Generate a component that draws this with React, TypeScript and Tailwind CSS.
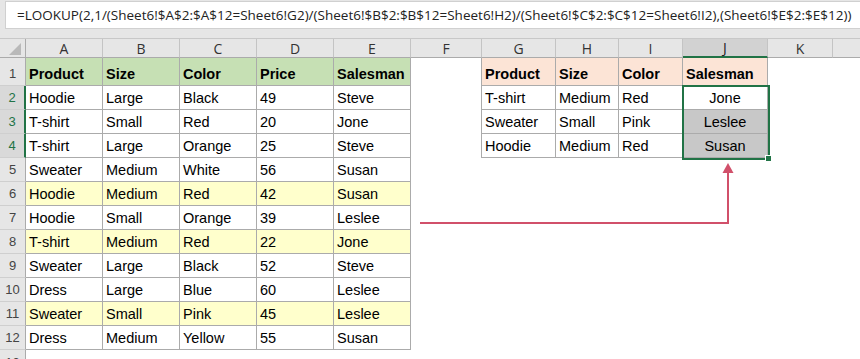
import React from 'react';

const FORMULA =
  '=LOOKUP(2,1/(Sheet6!$A$2:$A$12=Sheet6!G2)/(Sheet6!$B$2:$B$12=Sheet6!H2)/(Sheet6!$C$2:$C$12=Sheet6!I2),(Sheet6!$E$2:$E$12))';

const COLS = [
  { key: 'A', w: 77 },
  { key: 'B', w: 77 },
  { key: 'C', w: 77 },
  { key: 'D', w: 77 },
  { key: 'E', w: 77 },
  { key: 'F', w: 71 },
  { key: 'G', w: 74 },
  { key: 'H', w: 63 },
  { key: 'I', w: 64 },
  { key: 'J', w: 85 },
  { key: 'K', w: 65 },
];

const LEFT = [
  ['Product', 'Size', 'Color', 'Price', 'Salesman'],
  ['Hoodie', 'Large', 'Black', '49', 'Steve'],
  ['T-shirt', 'Small', 'Red', '20', 'Jone'],
  ['T-shirt', 'Large', 'Orange', '25', 'Steve'],
  ['Sweater', 'Medium', 'White', '56', 'Susan'],
  ['Hoodie', 'Medium', 'Red', '42', 'Susan'],
  ['Hoodie', 'Small', 'Orange', '39', 'Leslee'],
  ['T-shirt', 'Medium', 'Red', '22', 'Jone'],
  ['Sweater', 'Large', 'Black', '52', 'Steve'],
  ['Dress', 'Large', 'Blue', '60', 'Leslee'],
  ['Sweater', 'Small', 'Pink', '45', 'Leslee'],
  ['Dress', 'Medium', 'Yellow', '55', 'Susan'],
];

const RIGHT = [
  ['Product', 'Size', 'Color', 'Salesman'],
  ['T-shirt', 'Medium', 'Red', 'Jone'],
  ['Sweater', 'Small', 'Pink', 'Leslee'],
  ['Hoodie', 'Medium', 'Red', 'Susan'],
];

const YELLOW_ROWS = [6, 8, 11];

function cellStyle(row: number, col: number) {
  // col: 0..10 => A..K
  let bg = 'bg-white';
  let border = '';
  let text = '';
  let bold = false;
  let center = false;
  if (col <= 4 && row <= 12) {
    text = LEFT[row - 1][col];
    border = 'border-r border-b border-[#ababab]';
    if (row === 1) {
      bg = 'bg-[#c6e0b4]';
      bold = true;
    } else if (YELLOW_ROWS.includes(row)) {
      bg = 'bg-[#ffffcc]';
    }
  } else if (col === 5 && row <= 4) {
    border = 'border-r border-[#ababab]';
  } else if (col >= 6 && col <= 9 && row <= 4) {
    text = RIGHT[row - 1][col - 6];
    border = 'border-r border-b border-[#ababab]';
    if (row === 1) {
      bg = 'bg-[#fce4d6]';
      bold = true;
    } else if (col === 9) {
      center = true;
      if (row > 2) bg = 'bg-[#c8c8c8]';
    }
  }
  return { bg, border, text, bold, center };
}

function Row({ row }: { row: number }) {
  const selected = row >= 2 && row <= 4;
  return (
    <div className={`flex ${row === 1 ? 'h-[28px]' : 'h-[24px]'}`}>
      <div
        className={`w-[26px] shrink-0 flex items-end justify-center pb-[3px] border-b border-[#cfcfcf] text-[13px] leading-[16px] ${
          selected
            ? 'bg-[#d9d9d9] text-[#217346] border-r-2 border-r-[#217346]'
            : 'bg-[#e6e6e6] text-[#444] border-r border-r-[#ababab]'
        }`}
      >
        {row}
      </div>
      {COLS.map((c, i) => {
        const s = cellStyle(row, i);
        return (
          <div
            key={c.key}
            style={{ width: c.w }}
            className={`shrink-0 flex items-end overflow-hidden whitespace-nowrap px-[3px] text-[14.5px] leading-[17px] pb-[2px] text-black ${s.bg} ${s.border} ${
              s.bold ? 'font-bold' : ''
            } ${s.center ? 'justify-center' : ''}`}
          >
            {s.text}
          </div>
        );
      })}
      <div className="flex-1 bg-white" />
    </div>
  );
}

export default function App() {
  const rows = Array.from({ length: 12 }, (_, i) => i + 1);
  return (
    <div className="relative w-[860px] h-[359px] overflow-hidden bg-white font-['Liberation_Sans',Arial,sans-serif]">
      {/* formula bar */}
      <div className="h-[38px] bg-[#e6e6e6] pl-[5px] pt-[1px]">
        <div className="h-[28px] bg-white border border-[#d0d0d0] border-r-0 flex items-center pl-[11px] whitespace-nowrap overflow-hidden font-['Open_Sans',sans-serif] text-[13.5px] text-[#222]">
          {FORMULA}
        </div>
      </div>

      {/* column headers */}
      <div className="flex h-[20px] bg-[#e6e6e6] border-t border-[#c8c8c8]">
        <div className="relative w-[26px] shrink-0 border-r border-b border-[#ababab]">
          <svg className="absolute left-[9px] top-[4px]" width="13" height="12" viewBox="0 0 13 12">
            <polygon points="12,0 12,12 0,12" fill="#b9b9b9" />
          </svg>
        </div>
        {COLS.map((c) => (
          <div
            key={c.key}
            style={{ width: c.w }}
            className={`shrink-0 flex items-center justify-center text-[14px] font-['Open_Sans',sans-serif] border-r border-[#c4c4c4] ${
              c.key === 'J'
                ? 'bg-[#d2d2d2] border-b-2 border-b-[#217346] text-[#222]'
                : 'border-b border-b-[#ababab] text-[#333]'
            }`}
          >
            {c.key}
          </div>
        ))}
        <div className="flex-1 border-b border-[#ababab]" />
      </div>

      {rows.map((r) => (
        <Row key={r} row={r} />
      ))}

      {/* row 13 */}
      <div className="flex h-[20px]">
        <div className="w-[26px] shrink-0 flex items-start justify-center pt-[5px] bg-[#e6e6e6] text-[#444] text-[13px] leading-[16px] border-r border-[#ababab]">
          13
        </div>
        <div className="flex-1 bg-white" />
      </div>

      {/* selection J2:J4 */}
      <div className="absolute left-[682px] top-[85px] w-[88px] h-[75px] border-2 border-[#217346] pointer-events-none" />
      <div className="absolute left-[765px] top-[155px] w-[7px] h-[7px] bg-[#217346] border border-white pointer-events-none" />

      {/* arrow */}
      <svg className="absolute inset-0 pointer-events-none" width="860" height="359">
        <path d="M420 223 H728 V171" fill="none" stroke="#d1506a" strokeWidth="2" />
        <polygon points="728,163 722.5,173 733.5,173" fill="#d1506a" />
      </svg>
    </div>
  );
}
